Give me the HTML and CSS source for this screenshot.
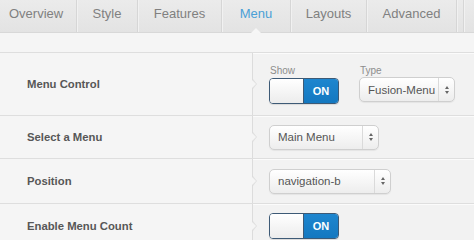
FILE: index.html
```html
<!DOCTYPE html>
<html>
<head>
<meta charset="utf-8">
<link rel="stylesheet" href="styles.css">
</head>
<body>
<div class="tabs">
  <div class="tab tab-overview">Overview</div>
  <div class="tab tab-style">Style</div>
  <div class="tab tab-features">Features</div>
  <div class="tab tab-menu active">Menu</div>
  <div class="tab tab-layouts">Layouts</div>
  <div class="tab tab-advanced">Advanced</div>
  <div class="tab tab-rest"></div>
</div>
<div class="panel">
  <div class="panel-top"></div>
  <div class="row row-control">
    <div class="label">Menu Control</div>
    <div class="field">
      <div class="group">
        <span class="cap">Show</span>
        <div class="toggle"><span class="toggle-off"></span><span class="toggle-on">ON</span></div>
      </div>
      <div class="group">
        <span class="cap">Type</span>
        <div class="select select-type"><span class="select-text">Fusion-Menu</span><span class="select-arrow"><i class="up"></i><i class="down"></i></span></div>
      </div>
    </div>
  </div>
  <div class="row row-select">
    <div class="label">Select a Menu</div>
    <div class="field">
      <div class="select select-menu"><span class="select-text">Main Menu</span><span class="select-arrow"><i class="up"></i><i class="down"></i></span></div>
    </div>
  </div>
  <div class="row row-position">
    <div class="label">Position</div>
    <div class="field">
      <div class="select select-pos"><span class="select-text">navigation-b</span><span class="select-arrow"><i class="up"></i><i class="down"></i></span></div>
    </div>
  </div>
  <div class="row row-count">
    <div class="label">Enable Menu Count</div>
    <div class="field">
      <div class="toggle"><span class="toggle-off"></span><span class="toggle-on">ON</span></div>
    </div>
  </div>
</div>
</body>
</html>
```

FILE: styles.css
```css
* { box-sizing: border-box; }
html, body { margin: 0; padding: 0; }
body {
  width: 474px;
  height: 240px;
  overflow: hidden;
  background: #f3f3f3;
  font-family: "Liberation Sans", Arial, Helvetica, sans-serif;
}

.tabs {
  display: flex;
  height: 33px;
  background: linear-gradient(#ebebeb, #e3e3e3);
  border-bottom: 1px solid #d8d8d8;
}
.tab {
  position: relative;
  height: 32px;
  padding-top: 6px;
  text-align: center;
  font-size: 13px;
  line-height: 15px;
  color: #808080;
  border-right: 1px solid #d6d6d6;
  box-shadow: 1px 0 0 #f1f1f1;
}
.tab-overview { width: 77px; text-align: left; padding-left: 9px; }
.tab-style { width: 61px; }
.tab-features { width: 84px; }
.tab-menu { width: 69px; }
.tab-layouts { width: 76px; }
.tab-advanced { width: 90px; }
.tab-rest { width: 7px; }
.tab.active { color: #4a9fd6; }
.tab.active::after {
  content: "";
  position: absolute;
  left: 50%;
  bottom: -1px;
  margin-left: -5px;
  border-left: 5px solid transparent;
  border-right: 5px solid transparent;
  border-bottom: 5px solid #f6f6f6;
}

.panel {
  background: #f2f2f2;
  box-shadow: inset 6px 0 6px -4px rgba(0, 0, 0, 0.07);
}
.panel-top {
  height: 19px;
  background: #f5f5f5;
}
.row {
  display: flex;
  align-items: stretch;
  border-top: 1px solid #dedede;
  box-shadow: inset 0 1px 0 #fbfbfb;
}
.row-control { height: 63px; }
.row-select { height: 43px; }
.row-position { height: 45px; }
.row-count { height: 45px; }

.label {
  width: 253px;
  flex: none;
  display: flex;
  align-items: center;
  padding-left: 27px;
  font-size: 11.3px;
  font-weight: bold;
  color: #575757;
  background: #f5f5f5;
  border-right: 1px solid #dcdcdc;
}
.field {
  position: relative;
  flex: 1;
  display: flex;
  align-items: center;
  gap: 20px;
  padding-left: 16px;
}
.field::before {
  content: "";
  position: absolute;
  left: 0;
  top: 50%;
  margin-top: -5px;
  border-top: 5px solid transparent;
  border-bottom: 5px solid transparent;
  border-left: 4px solid #e0e0e0;
}
.field::after {
  content: "";
  position: absolute;
  left: -1px;
  top: 50%;
  margin-top: -4px;
  border-top: 4px solid transparent;
  border-bottom: 4px solid transparent;
  border-left: 4px solid #f5f5f5;
}
.row-control .field { align-items: flex-start; padding-top: 12px; }

.group {
  display: flex;
  flex-direction: column;
  align-items: flex-start;
}
.cap {
  font-size: 10px;
  line-height: 11px;
  color: #8d8d8d;
  margin-left: 1px;
  margin-bottom: 2px;
}

.toggle {
  display: flex;
  width: 70px;
  height: 26px;
  border: 1px solid #3d5a76;
  border-radius: 4px;
  overflow: hidden;
  box-shadow: 0 1px 1px rgba(0,0,0,0.1);
}
.toggle-off {
  width: 34px;
  background: linear-gradient(#ffffff, #ececec);
  border-right: 1px solid #3d5a76;
}
.toggle-on {
  flex: 1;
  display: flex;
  align-items: center;
  justify-content: center;
  background: linear-gradient(#1e86cf, #1478c0);
  color: #fff;
  font-size: 11px;
  font-weight: bold;
}

.select {
  display: flex;
  align-items: center;
  height: 25px;
  border: 1px solid #cfcfcf;
  border-radius: 5px;
  background: linear-gradient(#ffffff, #ededed);
  box-shadow: 0 1px 1px rgba(0,0,0,0.06);
}
.select-type { width: 96px; margin-top: -1px; }
.select-menu { width: 110px; }
.select-pos { width: 122px; }
.select-text {
  flex: 1;
  padding-left: 8px;
  font-size: 11.5px;
  color: #555;
  white-space: nowrap;
}
.select-arrow {
  width: 16px;
  height: 100%;
  display: flex;
  flex-direction: column;
  align-items: center;
  justify-content: center;
  gap: 2px;
  border-left: 1px solid #dadada;
}
.select-arrow i {
  display: block;
  width: 0;
  height: 0;
  border-left: 2.5px solid transparent;
  border-right: 2.5px solid transparent;
}
.select-arrow .up { border-bottom: 3px solid #666; }
.select-arrow .down { border-top: 3px solid #666; }
```
